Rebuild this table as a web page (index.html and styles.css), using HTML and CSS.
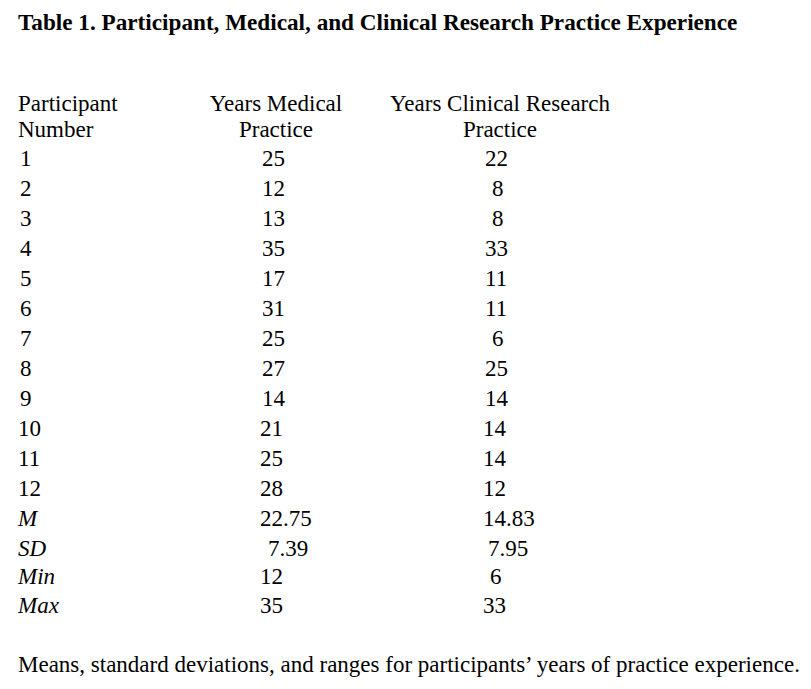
FILE: index.html
```html
<!DOCTYPE html>
<html>
<head>
<meta charset="utf-8">
<link rel="stylesheet" href="styles.css">
</head>
<body>
<div class="page">
  <h1 class="title">Table 1. Participant, Medical, and Clinical Research Practice Experience</h1>
  <div class="table">
    <div class="head">
      <div class="c1">Participant<br>Number</div>
      <div class="c2">Years Medical<br>Practice</div>
      <div class="c3">Years Clinical Research<br>Practice</div>
    </div>
    <div class="row"><span class="c1 ind">1</span><span class="c2 n">25</span><span class="c3 n">22</span></div>
    <div class="row"><span class="c1 ind">2</span><span class="c2 n">12</span><span class="c3 n one">8</span></div>
    <div class="row"><span class="c1 ind">3</span><span class="c2 n">13</span><span class="c3 n one">8</span></div>
    <div class="row"><span class="c1 ind">4</span><span class="c2 n">35</span><span class="c3 n">33</span></div>
    <div class="row"><span class="c1 ind">5</span><span class="c2 n">17</span><span class="c3 n">11</span></div>
    <div class="row"><span class="c1 ind">6</span><span class="c2 n">31</span><span class="c3 n">11</span></div>
    <div class="row"><span class="c1 ind">7</span><span class="c2 n">25</span><span class="c3 n one">6</span></div>
    <div class="row"><span class="c1 ind">8</span><span class="c2 n">27</span><span class="c3 n">25</span></div>
    <div class="row"><span class="c1 ind">9</span><span class="c2 n">14</span><span class="c3 n">14</span></div>
    <div class="row"><span class="c1">10</span><span class="c2 n">21</span><span class="c3 n">14</span></div>
    <div class="row"><span class="c1">11</span><span class="c2 n">25</span><span class="c3 n">14</span></div>
    <div class="row"><span class="c1">12</span><span class="c2 n">28</span><span class="c3 n">12</span></div>
    <div class="row"><span class="c1 it">M</span><span class="c2 n">22.75</span><span class="c3 n">14.83</span></div>
    <div class="row short"><span class="c1 it">SD</span><span class="c2 n sd2">7.39</span><span class="c3 n sd3">7.95</span></div>
    <div class="row mid"><span class="c1 it">Min</span><span class="c2 n">12</span><span class="c3 n one">6</span></div>
    <div class="row"><span class="c1 it">Max</span><span class="c2 n">35</span><span class="c3 n">33</span></div>
  </div>
  <p class="note">Means, standard deviations, and ranges for participants’ years of practice experience.</p>
</div>
</body>
</html>
```

FILE: styles.css
```css
html, body {
  margin: 0;
  padding: 0;
  background: #ffffff;
}
.page {
  padding: 9px 0 0 18px;
  font-family: "Liberation Serif", "Times New Roman", serif;
  color: #000000;
}
.title {
  margin: 0;
  font-size: 23.2px;
  font-weight: bold;
  line-height: 27px;
}
.table {
  margin-top: 55px;
  font-size: 23px;
}
.head {
  display: flex;
  line-height: 26px;
  margin-bottom: 1px;
}
.head .c1 { width: 182px; }
.head .c2 { width: 152px; text-align: center; }
.head .c3 { width: 296px; text-align: center; }
.row {
  display: flex;
  height: 30px;
  line-height: 30px;
}
.row.short { height: 28px; }
.row.mid { height: 29px; }
.row .c1 { width: 182px; }
.row .c2 { width: 152px; box-sizing: border-box; padding-left: 60px; }
.row .c3 { width: 296px; box-sizing: border-box; padding-left: 131px; }
.ind { padding-left: 2px; }
.it { font-style: italic; }
.row .c3.one { padding-left: 138px; }
.row .c2.sd2 { padding-left: 68px; }
.row .c3.sd3 { padding-left: 136px; }
.note {
  margin: 31px 0 0 0;
  font-size: 23px;
  line-height: 26px;
}
```
